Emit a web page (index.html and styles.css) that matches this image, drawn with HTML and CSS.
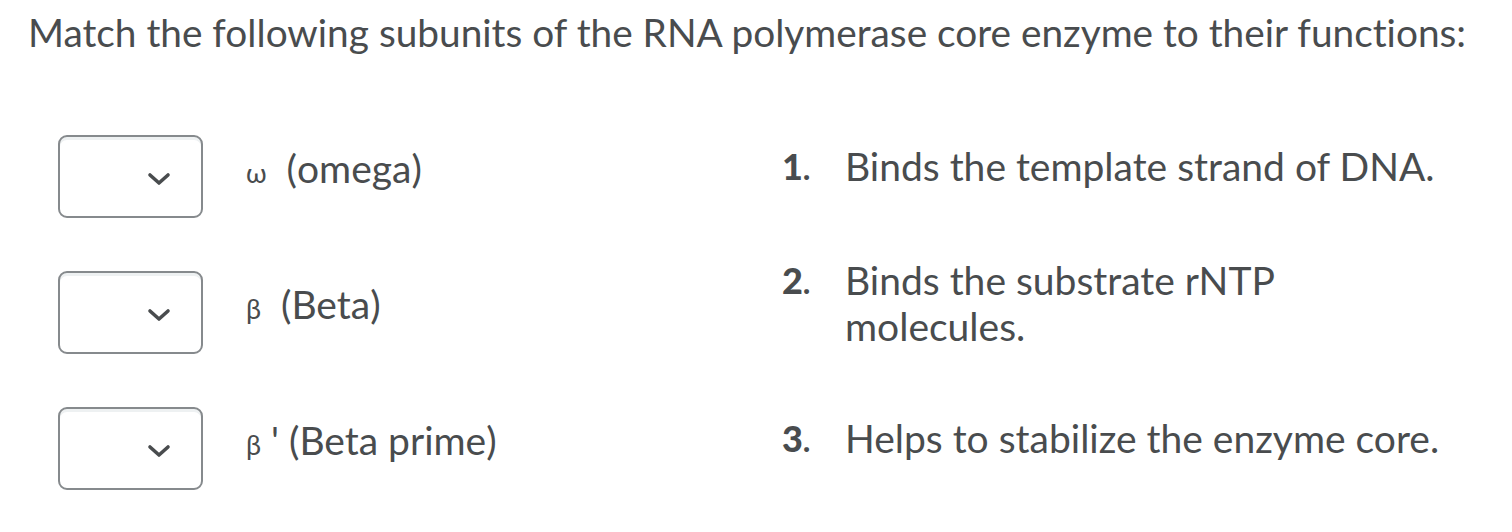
FILE: index.html
```html
<!DOCTYPE html>
<html>
<head>
<meta charset="utf-8">
<link rel="stylesheet" href="styles.css">
</head>
<body>
<div class="page">
  <h1 class="title">Match the following subunits of the RNA polymerase core enzyme to their functions:</h1>
  <div class="rows">
    <div class="row">
      <div class="select"><svg class="chev" viewBox="0 0 24 14" width="24" height="14"><path d="M3 3 L12 11 L21 3" fill="none" stroke="#494c4e" stroke-width="3.6" stroke-linecap="round" stroke-linejoin="round"/></svg></div>
      <div class="label"><span class="greek">ω</span>&nbsp; (omega)</div>
      <div class="item"><div class="num">1<span class="dot">.</span></div><div class="text">Binds the template strand of DNA.</div></div>
    </div>
    <div class="row">
      <div class="select"><svg class="chev" viewBox="0 0 24 14" width="24" height="14"><path d="M3 3 L12 11 L21 3" fill="none" stroke="#494c4e" stroke-width="3.6" stroke-linecap="round" stroke-linejoin="round"/></svg></div>
      <div class="label"><span class="greek">β</span>&nbsp; (Beta)</div>
      <div class="item"><div class="num">2<span class="dot">.</span></div><div class="text">Binds the substrate rNTP<br>molecules.</div></div>
    </div>
    <div class="row">
      <div class="select"><svg class="chev" viewBox="0 0 24 14" width="24" height="14"><path d="M3 3 L12 11 L21 3" fill="none" stroke="#494c4e" stroke-width="3.6" stroke-linecap="round" stroke-linejoin="round"/></svg></div>
      <div class="label"><span class="greek">β</span> ' (Beta prime)</div>
      <div class="item"><div class="num">3<span class="dot">.</span></div><div class="text">Helps to stabilize the enzyme core.</div></div>
    </div>
  </div>
</div>
</body>
</html>
```
FILE: styles.css
```css
html, body {
  margin: 0;
  padding: 0;
  background: #ffffff;
}
body {
  font-family: Lato, "Liberation Sans", sans-serif;
  color: #494c4e;
  font-variant-ligatures: none;
}
.page {
  padding: 0 0 0 28px;
}
.title {
  margin: 0;
  padding-top: 6px;
  font-size: 38.8px;
  font-weight: 400;
  line-height: 52px;
  white-space: nowrap;
}
.rows {
  display: flex;
  flex-direction: column;
  gap: 53px;
  margin-top: 77px;
  padding-left: 30px;
}
.row {
  display: flex;
  align-items: center;
  height: 83px;
}
.select {
  box-sizing: border-box;
  width: 145px;
  height: 83px;
  border: 2px solid #868a8d;
  border-radius: 9px;
  box-shadow: inset 0 3px 0 #eef1f2;
  display: flex;
  align-items: center;
  justify-content: flex-end;
  padding-right: 30px;
  flex: none;
}
.chev {
  display: block;
  margin-top: 4px;
}
.label {
  width: 536px;
  margin-left: 43px;
  font-size: 39px;
  line-height: 46px;
  margin-top: -12px;
  white-space: nowrap;
}
.greek {
  font-size: 27px;
}
.item {
  display: flex;
  align-items: flex-start;
  margin-top: -20px;
}
.num {
  width: 63px;
  font-size: 36px;
  font-weight: 900;
  line-height: 46px;
}
.dot {
  font-size: 30px;
}
.text {
  font-size: 39px;
  line-height: 46px;
  white-space: nowrap;
}
```
